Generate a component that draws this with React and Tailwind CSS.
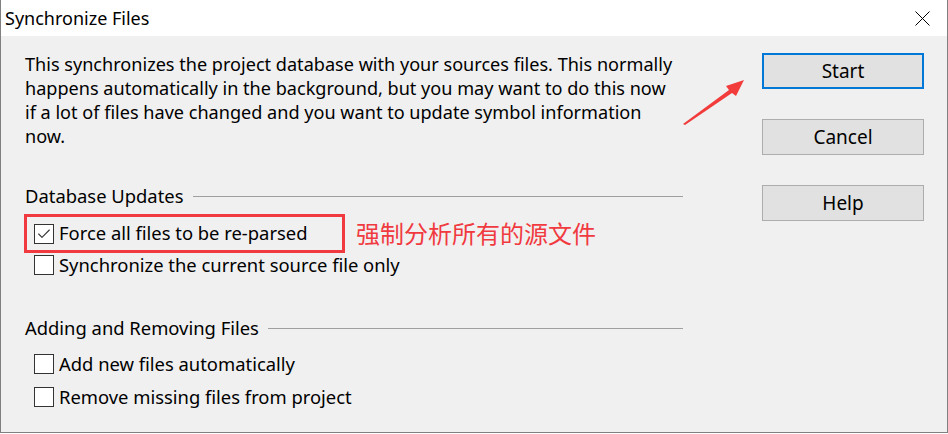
import { Check } from "lucide-react";

const font = { fontFamily: '"Noto Sans", "Noto Sans CJK SC", sans-serif' };

function Checkbox({ checked }) {
  return (
    <span className="flex h-[20px] w-[20px] shrink-0 items-center justify-center border border-[#333333] bg-white">
      {checked && <Check className="h-[16px] w-[16px] text-[#333333]" strokeWidth={1.6} />}
    </span>
  );
}

function Option({ checked, label, className = "" }) {
  return (
    <div className={`flex h-[24px] items-center gap-[5px] pl-[10px] ${className}`}>
      <Checkbox checked={checked} />
      <span className="text-[18.4px] leading-none text-black">{label}</span>
    </div>
  );
}

function GroupHeader({ title, className = "" }) {
  return (
    <div className={`flex h-[24px] items-center gap-[9px] pl-px ${className}`}>
      <span className="text-[18.4px] leading-none text-black whitespace-nowrap">{title}</span>
      <span className="h-px flex-1 bg-[#a0a0a0]" />
    </div>
  );
}

function Button({ label, primary }) {
  return (
    <button
      className={`flex h-[36px] w-[162px] items-center justify-center bg-[#e1e1e1] text-[19px] text-black ${
        primary ? "border-2 border-[#0078d7]" : "border border-[#adadad]"
      }`}
    >
      {label}
    </button>
  );
}

export default function App() {
  return (
    <div
      style={font}
      className="relative flex h-[433px] w-[948px] flex-col overflow-hidden border-x border-b border-[#808080] bg-[#f0f0f0]"
    >
      {/* title bar */}
      <div className="flex h-[36px] shrink-0 items-center justify-between bg-white pl-[4px] pr-[17px]">
        <span className="text-[18px] text-black">Synchronize Files</span>
        <svg width="15" height="15" viewBox="0 0 15 15" className="text-black">
          <path d="M0.5 0.5 L14.5 14.5 M14.5 0.5 L0.5 14.5" stroke="currentColor" strokeWidth="1" fill="none" />
        </svg>
      </div>

      <div className="flex flex-1">
        {/* left column */}
        <div className="flex w-[682px] flex-col pl-[23px] pt-[16px]">
          <p className="whitespace-nowrap pl-px text-[18.1px] leading-[24px] text-black">
            This synchronizes the project database with your sources files. This normally
            <br />
            happens automatically in the background, but you may want to do this now
            <br />
            if a lot of files have changed and you want to update symbol information
            <br />
            now.
          </p>

          <GroupHeader title="Database Updates" className="mt-[36px]" />

          <div className="mt-[6px] flex items-center">
            <div className="flex h-[39px] w-[321px] items-center border-[3px] border-[#f03a3f] pl-[7px]">
              <Checkbox checked />
              <span className="ml-[5px] text-[18.4px] leading-none text-black">
                Force all files to be re-parsed
              </span>
            </div>
            <span className="ml-[11px] text-[24px] leading-none text-[#f03a3f]">
              强制分析所有的源文件
            </span>
          </div>

          <Option label="Synchronize the current source file only" />

          <GroupHeader title="Adding and Removing Files" className="mt-[39px]" />

          <Option label="Add new files automatically" className="mt-[12px]" />
          <Option label="Remove missing files from project" className="mt-[9px]" />
        </div>

        {/* right column */}
        <div className="ml-[79px] flex flex-col gap-[30px] pt-[17px]">
          <Button label="Start" primary />
          <Button label="Cancel" />
          <Button label="Help" />
        </div>
      </div>

      {/* annotation arrow */}
      <svg
        className="absolute left-[680px] top-[78px]"
        width="66"
        height="48"
        viewBox="0 0 66 48"
      >
        <polygon points="2,46 48,12 45,8 63,2 55,18 51,15 4,47" fill="#f23c3c" />
      </svg>
    </div>
  );
}
